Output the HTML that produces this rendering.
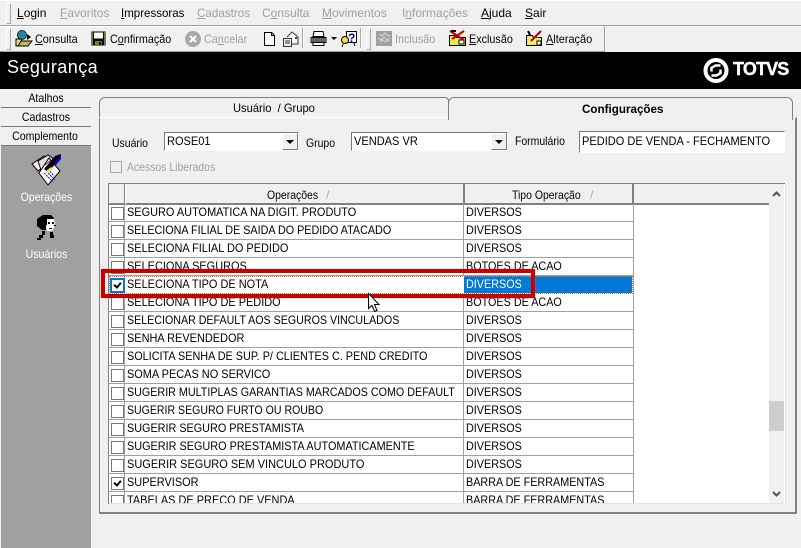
<!DOCTYPE html>
<html><head><meta charset="utf-8"><style>
html,body{margin:0;padding:0}
body{width:801px;height:548px;overflow:hidden;position:relative;background:#f0f0f0;font:12px "Liberation Sans",sans-serif;color:#000}
.a{position:absolute}
.t{position:absolute;white-space:nowrap;line-height:14px;height:14px;transform-origin:0 50%}
.s9{transform:scaleX(.9)}
.s87{transform:scaleX(.87)}
.c9{transform:scaleX(.88);transform-origin:50% 50%}
.d{color:#a0a0a0}
u{text-decoration:underline}
svg{position:absolute;overflow:visible}
.r{position:absolute;left:0;width:524px;height:18px}
.r b{position:absolute;font-weight:normal;white-space:nowrap;top:1px;line-height:14px;transform:scaleX(.912);transform-origin:0 50%}
.r .n{left:18px}
.r .y{left:357px;transform:scaleX(.9)}
.r i{position:absolute;left:2px;top:3px;width:11px;height:11px;border:1px solid #777;background:#fff}
.r i.c:after{content:"";position:absolute;left:2px;top:0;width:5px;height:3px;border-left:2px solid #000;border-bottom:2px solid #000;transform:translate(0,2px) rotate(-50deg)}
.r s{position:absolute;left:0;right:0;bottom:0;height:1px;background:#a0a0a0}
.r em{position:absolute;top:0;bottom:0;width:1px;background:#a0a0a0}
.inp{position:absolute;background:#fff;border:1px solid #fff;border-top-color:#777;border-left-color:#777;height:19px;line-height:17px;padding-left:2px;box-sizing:border-box;white-space:nowrap;overflow:hidden}
.inp span{display:inline-block;transform:scaleX(.92);transform-origin:0 50%}
.btn{position:absolute;width:16px;height:17px;background:#f0f0f0;border:1px solid #777;border-top-color:#fff;border-left-color:#fff;box-sizing:border-box}
.btn:after{content:"";position:absolute;left:3px;top:6px;border:4px solid transparent;border-top:4px solid #000;border-bottom:0}
</style></head><body>

<!-- menu bar -->
<div class="a" style="left:0;top:25px;width:801px;height:1px;background:#a0a0a0"></div>
<div class="a" style="left:0;top:0;width:801px;height:1px;background:#fff"></div>
<div class="a" style="left:6px;top:3px;width:3px;height:19px;border:1px solid #a8a8a8;border-top-color:#fff;border-left-color:#fff"></div>
<div class="t" style="left:17px;top:6px"><u>L</u>ogin</div>
<div class="t d" style="left:60px;top:6px"><u>F</u>avoritos</div>
<div class="t" style="left:121px;top:6px;transform:scaleX(.96)"><u>I</u>mpressoras</div>
<div class="t d" style="left:197px;top:6px;transform:scaleX(.97)"><u>C</u>adastros</div>
<div class="t d" style="left:262px;top:6px">C<u>o</u>nsulta</div>
<div class="t d" style="left:322px;top:6px"><u>M</u>ovimentos</div>
<div class="t d" style="left:402px;top:6px">I<u>n</u>formações</div>
<div class="t" style="left:481px;top:6px"><u>A</u>juda</div>
<div class="t" style="left:525px;top:6px"><u>S</u>air</div>

<!-- toolbar -->
<div class="a" style="left:0;top:26px;width:604px;height:25px;border-right:1px solid #a0a0a0;border-top:1px solid #fff"></div>
<div class="a" style="left:0;top:51px;width:605px;height:1px;background:#a0a0a0"></div>
<div class="a" style="left:6px;top:28px;width:3px;height:20px;border:1px solid #a8a8a8;border-top-color:#fff;border-left-color:#fff"></div>

<svg style="left:15px;top:30px" width="18" height="18" viewBox="0 0 18 18"><circle cx="7" cy="5" r="4.500" fill="#2a7fd0" stroke="#123"/><path d="M4 3h3v3H4zM8 5h3v2H8z" fill="#1a9a3a"/><path d="M1 9h5l1 2h6v5H1z" fill="#e8e070" stroke="#000"/><path d="M3 16l3-5h11l-4 5z" fill="#c8b848" stroke="#000"/><path d="M12 4l4 3-4 3z" fill="#000"/></svg>
<div class="t s9" style="left:35px;top:32px"><u>C</u>onsulta</div>
<svg style="left:91px;top:31px" width="15" height="15" viewBox="0 0 15 15"><path d="M.5.5h14v14H.5z" fill="#000"/><path d="M3 1.500h9v6H3z" fill="#fff"/><path d="M4 10h7v4H4z" fill="#808000"/><path d="M8 11h2v3H8z" fill="#000"/><path d="M1 1h1v13H1zM13 1h1v13h-1z" fill="#808000"/></svg>
<div class="t s9" style="left:110px;top:32px">C<u>o</u>nfirmação</div>
<svg style="left:185px;top:31px" width="16" height="16" viewBox="0 0 16 16"><circle cx="8" cy="8" r="8" fill="#a8a8a8"/><path d="M5 5l6 6M11 5l-6 6" stroke="#fff" stroke-width="2"/></svg>
<div class="t d s9" style="left:204px;top:32px">Ca<u>n</u>celar</div>
<svg style="left:263px;top:32px" width="13" height="14" viewBox="0 0 13 14"><path d="M1.500.5h7l3 3v10h-10z" fill="#fff" stroke="#000"/><path d="M8.500.5v3h3" fill="none" stroke="#000"/></svg>
<svg style="left:283px;top:31px" width="16" height="16" viewBox="0 0 16 16"><path d="M4 6l5-5 6 5v7H9" fill="#fff" stroke="#333"/><path d="M.5 7.500h8v8h-8z" fill="#eee" stroke="#333"/><path d="M2 10h5M2 12h5" stroke="#333"/><path d="M12 6h2v2h-2z" fill="#c00"/></svg>
<div class="a" style="left:302px;top:28px;width:1px;height:20px;background:#a8a8a8;border-right:1px solid #fff"></div>
<svg style="left:310px;top:31px" width="17" height="15" viewBox="0 0 17 15"><path d="M4 .5h9l1 5H3z" fill="#fff" stroke="#000"/><path d="M1 6.500h15v5H1z" fill="#c8c8c8" stroke="#000"/><path d="M3 11.500h11v3H3z" fill="#fff" stroke="#000"/><path d="M2 8h13M2 10h13" stroke="#000"/></svg>
<div class="a" style="left:331px;top:37px;border:3px solid transparent;border-top:3px solid #000;border-bottom:0"></div>
<svg style="left:341px;top:31px" width="16" height="16" viewBox="0 0 16 16"><path d="M5.500.5h10v11h-10z" fill="#fff" stroke="#000"/><circle cx="4" cy="9" r="3.500" fill="#f0e040" stroke="#000"/><text x="7" y="11" font-family="Liberation Sans" font-weight="bold" font-size="12" fill="#000080">?</text><path d="M2 13l-1 3M13 12l1 3" stroke="#000"/></svg>
<div class="a" style="left:360px;top:28px;width:1px;height:20px;background:#a8a8a8;border-right:1px solid #fff"></div>
<div class="a" style="left:366px;top:28px;width:3px;height:20px;border:1px solid #a8a8a8;border-top-color:#fff;border-left-color:#fff"></div>
<div class="a" style="left:376px;top:31px;width:16px;height:15px;background:#a0a0a0"></div>
<svg style="left:376px;top:31px" width="16" height="15" viewBox="0 0 16 15"><path d="M3 3l3 2 3-3 3 3 2-1M2 7l3 2 3-3 3 3 3-2M4 11l3-2 3 2 3-2" stroke="#d8d8d8" fill="none"/></svg>
<div class="t d s9" style="left:395px;top:32px">Inclusão</div>
<svg style="left:449px;top:30px" width="17" height="16" viewBox="0 0 17 16"><path d="M.5 5.500h6l1 2h9v8H.5z" fill="#f0e850" stroke="#000"/><path d="M10 10h5v4h-5z" fill="#fff" stroke="#000"/><path d="M1 1l14 9M15 1L3 9" stroke="#c00000" stroke-width="2"/><path d="M2 0h5v2H2z" fill="#000"/></svg>
<div class="t s9" style="left:469px;top:32px"><u>E</u>xclusão</div>
<svg style="left:526px;top:30px" width="17" height="16" viewBox="0 0 17 16"><path d="M.5 5.500h6l1 2h8v8H.5z" fill="#f0e850" stroke="#000"/><path d="M3 8h10M3 10h10M3 12h10" stroke="#fff" stroke-dasharray="1 1"/><path d="M5 11L15 1" stroke="#b00000" stroke-width="2"/><path d="M2 1l2 4" stroke="#000" stroke-width="2"/><path d="M11 11h4v4h-4z" fill="#fff" stroke="#000"/></svg>
<div class="t" style="left:546px;top:32px;transform:scaleX(.91)"><u>A</u>lteração</div>

<!-- black header -->
<div class="a" style="left:0;top:52px;width:801px;height:37px;background:#000"></div>
<div class="t" style="left:7px;top:57px;color:#fff;font-size:18px;line-height:21px;height:21px;letter-spacing:.45px">Segurança</div>
<svg style="left:703px;top:58px" width="26" height="25" viewBox="0 0 26 25"><circle cx="13" cy="12.500" r="10.500" fill="none" stroke="#fff" stroke-width="4"/><path d="M8.500 13.500v-3.500l4-2.500h5M17.500 11.500v3.500l-4 2.500h-5" fill="none" stroke="#fff" stroke-width="2.500"/></svg>
<div class="t" style="left:733px;top:59px;color:#fff;font-size:18px;font-weight:bold;line-height:21px;height:21px;letter-spacing:-.85px;-webkit-text-stroke:.4px #fff">TOTVS</div>

<!-- sidebar -->
<div class="a" style="left:0;top:89px;width:91px;height:459px;background:#a0a0a0"></div>
<div class="a" style="left:1px;top:89px;width:90px;height:18px;background:#f0f0f0;border-bottom:1px solid #777"></div>
<div class="a" style="left:1px;top:108px;width:90px;height:18px;background:#f0f0f0;border-bottom:1px solid #777"></div>
<div class="a" style="left:1px;top:127px;width:90px;height:18px;background:#f0f0f0;border-bottom:1px solid #777"></div>
<div class="t c9" style="left:1px;top:91px;width:90px;text-align:center">Atalhos</div>
<div class="t c9" style="left:1px;top:110px;width:90px;text-align:center">Cadastros</div>
<div class="t c9" style="left:0;top:129px;width:90px;text-align:center">Complemento</div>
<div class="a" style="left:0;top:89px;width:1px;height:459px;background:#f0f0f0"></div>
<svg style="left:30px;top:153px" width="34" height="32" viewBox="0 0 34 32"><path d="M2 11L14 3l8 4L8 18z" fill="#f4f4f4" stroke="#000"/><path d="M8 8L18 2l6 4-12 14z" fill="#e0e0e0" stroke="#000"/><path d="M9 20L19 5l11 13-12 14z" fill="#fff" stroke="#000"/><path d="M15 12l5-4 2 3-4 2" fill="none" stroke="#a000a0"/><path d="M14 20l9 9M16 18l9 9M18 16l6 7" stroke="#0000d0" stroke-dasharray="2 1"/><path d="M18 19L31 5V1L25 3 14 16z" fill="#000"/><path d="M24 10l7-9v5l-5 6z" fill="#0000c0"/><path d="M15 19l6-5 2 2-6 4z" fill="#f0e840"/></svg>
<div class="t c9" style="left:1px;top:190px;width:91px;text-align:center;color:#fff">Operações</div>
<svg style="left:36px;top:214px" width="21" height="26" viewBox="0 0 21 26"><path d="M7 1h8l3 3v2h-6v5h-2v5H6L1 12V5z" fill="#000"/><path d="M11 5h7l1 4-1 5-2 3h-5l-1-4 1-2z" fill="#fff"/><path d="M12 8h2v2h-2zM16 8h2v2h-2zM13 14h3v1h-3zM6 17h3v4H6zM14 18h3v3h-3zM3 21h4v3H3zM14 21h4v3h-4zM1 24h4v2H1zM18 11h2v1h-2z" fill="#000"/></svg>
<div class="t c9" style="left:1px;top:247px;width:91px;text-align:center;color:#fff">Usuários</div>

<!-- tabs and panel -->
<div class="a" style="left:99px;top:97px;width:348px;height:20px;background:#f0f0f0;border:1px solid #808080;border-bottom:2px solid #fff;border-radius:6px 4px 0 0;box-sizing:content-box"></div>
<div class="t" style="left:233px;top:101px;transform:scaleX(.93)">Usuário &nbsp;/ Grupo</div>
<div class="a" style="left:99px;top:117px;width:695px;height:394px;background:#f0f0f0;border:1px solid #a0a0a0;border-top:1px solid #fff;border-right:2px solid #808080;border-bottom:2px solid #808080;border-left:1px solid #808080"></div>
<div class="a" style="left:448px;top:97px;width:343px;height:22px;background:#f0f0f0;border:1px solid #808080;border-bottom:0;border-radius:6px 6px 0 0"></div>
<div class="a" style="left:792px;top:104px;width:1px;height:15px;background:#808080"></div>
<div class="t" style="left:582px;top:102px;font-weight:bold;transform:scaleX(.97)">Configurações</div>

<!-- form -->
<div class="t s87" style="left:112px;top:136px">Usuário</div>
<div class="inp" style="left:164px;top:132px;width:135px"><span>ROSE01</span></div>
<div class="btn" style="left:282px;top:133px"></div>
<div class="t s87" style="left:306px;top:136px">Grupo</div>
<div class="inp" style="left:351px;top:132px;width:157px"><span>VENDAS VR</span></div>
<div class="btn" style="left:491px;top:133px"></div>
<div class="t s87" style="left:515px;top:134px">Formulário</div>
<div class="inp" style="left:579px;top:131px;width:206px;height:22px;line-height:18px"><span>PEDIDO DE VENDA - FECHAMENTO</span></div>
<div class="a" style="left:110px;top:161px;width:10px;height:10px;border:1px solid #a8a8a8;background:#f0f0f0"></div>
<div class="t d s87" style="left:127px;top:160px">Acessos Liberados</div>

<!-- grid -->
<div class="a" style="left:108px;top:183px;width:676px;height:320px;background:#fff;border:1px solid #808080;border-width:1px 0 0 1px;overflow:hidden">
  <div class="a" style="left:0;top:0;width:660px;height:19px;background:#f0f0f0;border-bottom:2px solid #808080"></div>
  <div class="a" style="left:15px;top:0;width:1px;height:320px;background:#a0a0a0"></div>
  <div class="a" style="left:15px;top:0;width:1px;height:20px;background:#808080;border-right:1px solid #fff"></div>
  <div class="a" style="left:354px;top:0;width:2px;height:20px;background:#808080"></div>
  <div class="a" style="left:523px;top:0;width:2px;height:20px;background:#808080"></div>
  <div class="a" style="left:524px;top:20px;width:1px;height:300px;background:#a0a0a0"></div>
  <div class="t s87" style="left:158px;top:4px">Operações</div>
  <div class="t" style="left:217px;top:4px;color:#aaa">/</div>
  <div class="t s87" style="left:403px;top:4px">Tipo Operação</div>
  <div class="t" style="left:481px;top:4px;color:#aaa">/</div>

  <div style="position:absolute;left:0;top:20px;width:524px;height:300px;overflow:hidden">
  <div class="r" style="top:0"><i></i><b class="n">SEGURO AUTOMATICA NA DIGIT. PRODUTO</b><b class="y">DIVERSOS</b><s></s><em style="left:15px"></em><em style="left:354px"></em></div>
  <div class="r" style="top:18px"><i></i><b class="n" style="transform:scaleX(.897)">SELECIONA FILIAL DE SAIDA DO PEDIDO ATACADO</b><b class="y">DIVERSOS</b><s></s><em style="left:15px"></em><em style="left:354px"></em></div>
  <div class="r" style="top:36px"><i></i><b class="n">SELECIONA FILIAL DO PEDIDO</b><b class="y">DIVERSOS</b><s></s><em style="left:15px"></em><em style="left:354px"></em></div>
  <div class="r" style="top:54px"><i></i><b class="n">SELECIONA SEGUROS</b><b class="y">BOTOES DE ACAO</b><s></s><em style="left:15px"></em><em style="left:354px"></em></div>
  <div class="r" style="top:72px"><i class="c" style="border:2px solid #0078d7;left:1px;top:2px"></i><b class="n">SELECIONA TIPO DE NOTA</b><div class="a" style="left:355px;top:0;width:168px;height:17px;background:#0078d7"></div><b class="y" style="color:#fff">DIVERSOS</b><div class="a" style="left:0;top:0;width:522px;height:16px;border:1px dotted #e08030"></div></div>
  <div class="r" style="top:90px"><i></i><b class="n">SELECIONA TIPO DE PEDIDO</b><b class="y">BOTOES DE ACAO</b><s></s><em style="left:15px"></em><em style="left:354px"></em></div>
  <div class="r" style="top:108px"><i></i><b class="n" style="transform:scaleX(.889)">SELECIONAR DEFAULT AOS SEGUROS VINCULADOS</b><b class="y">DIVERSOS</b><s></s><em style="left:15px"></em><em style="left:354px"></em></div>
  <div class="r" style="top:126px"><i></i><b class="n">SENHA REVENDEDOR</b><b class="y">DIVERSOS</b><s></s><em style="left:15px"></em><em style="left:354px"></em></div>
  <div class="r" style="top:144px"><i></i><b class="n" style="transform:scaleX(.903)">SOLICITA SENHA DE SUP. P/ CLIENTES C. PEND CREDITO</b><b class="y">DIVERSOS</b><s></s><em style="left:15px"></em><em style="left:354px"></em></div>
  <div class="r" style="top:162px"><i></i><b class="n">SOMA PECAS NO SERVICO</b><b class="y">DIVERSOS</b><s></s><em style="left:15px"></em><em style="left:354px"></em></div>
  <div class="r" style="top:180px"><i></i><b class="n" style="transform:scaleX(.895)">SUGERIR MULTIPLAS GARANTIAS MARCADOS COMO DEFAULT</b><b class="y">DIVERSOS</b><s></s><em style="left:15px"></em><em style="left:354px"></em></div>
  <div class="r" style="top:198px"><i></i><b class="n" style="transform:scaleX(.88)">SUGERIR SEGURO FURTO OU ROUBO</b><b class="y">DIVERSOS</b><s></s><em style="left:15px"></em><em style="left:354px"></em></div>
  <div class="r" style="top:216px"><i></i><b class="n" style="transform:scaleX(.902)">SUGERIR SEGURO PRESTAMISTA</b><b class="y">DIVERSOS</b><s></s><em style="left:15px"></em><em style="left:354px"></em></div>
  <div class="r" style="top:234px"><i></i><b class="n" style="transform:scaleX(.905)">SUGERIR SEGURO PRESTAMISTA AUTOMATICAMENTE</b><b class="y">DIVERSOS</b><s></s><em style="left:15px"></em><em style="left:354px"></em></div>
  <div class="r" style="top:252px"><i></i><b class="n" style="transform:scaleX(.916)">SUGERIR SEGURO SEM VINCULO PRODUTO</b><b class="y">DIVERSOS</b><s></s><em style="left:15px"></em><em style="left:354px"></em></div>
  <div class="r" style="top:270px"><i class="c"></i><b class="n">SUPERVISOR</b><b class="y">BARRA DE FERRAMENTAS</b><s></s><em style="left:15px"></em><em style="left:354px"></em></div>
  <div class="r" style="top:288px"><i></i><b class="n">TABELAS DE PRECO DE VENDA</b><b class="y">BARRA DE FERRAMENTAS</b><em style="left:15px"></em><em style="left:354px"></em></div>
  </div>

  <!-- scrollbar -->
  <div class="a" style="left:660px;top:0;width:15px;height:320px;background:#f0f0f0"></div>
  <div class="a" style="left:660px;top:217px;width:15px;height:30px;background:#cdcdcd"></div>
  <svg style="left:663px;top:7px" width="9" height="6" viewBox="0 0 9 6"><path d="M1 5l3.500-3.500L8 5" fill="none" stroke="#555" stroke-width="2"/></svg>
  <svg style="left:663px;top:307px" width="9" height="6" viewBox="0 0 9 6"><path d="M1 1l3.500 3.500L8 1" fill="none" stroke="#555" stroke-width="2"/></svg>
</div>
<div class="a" style="left:109px;top:503px;width:676px;height:1px;background:#e3e3e3"></div>
<div class="a" style="left:785px;top:184px;width:1px;height:320px;background:#e3e3e3"></div>

<!-- red highlight -->
<div class="a" style="left:101px;top:269px;width:426px;height:21px;border:4px solid #c80000;box-shadow:0 0 1px #e08080"></div>

<!-- cursor -->
<svg style="left:368px;top:293px" width="13" height="20" viewBox="0 0 13 20"><path d="M.5.500v15l3.500-3 2.500 6 2.500-1-2.500-6h4.500z" fill="#fff" stroke="#000"/></svg>

</body></html>
